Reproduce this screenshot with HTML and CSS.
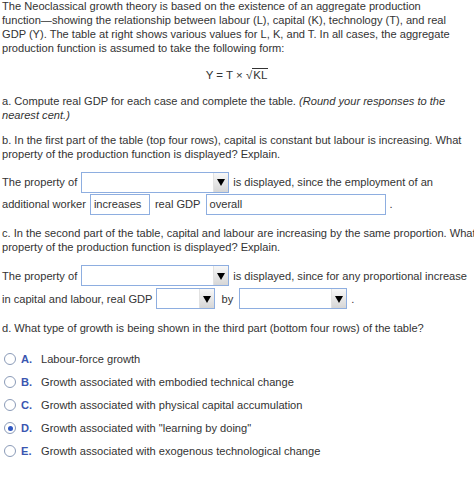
FILE: index.html
```html
<!DOCTYPE html>
<html>
<head>
<meta charset="utf-8">
<link rel="stylesheet" href="styles.css">
</head>
<body>
<div class="page">
  <p class="para intro">The Neoclassical growth theory is based on the existence of an aggregate production<br>function—showing the relationship between labour (L), capital (K), technology (T), and real<br>GDP (Y). The table at right shows various values for L, K, and T. In all cases, the aggregate<br>production function is assumed to take the following form:</p>

  <div class="formula">Y = T × <span class="sqrt"><span class="rad">√</span><span class="radicand">KL</span></span></div>

  <p class="para qa">a. Compute real GDP for each case and complete the table. <i>(Round your responses to the<br>nearest cent.)</i></p>

  <p class="para qb">b. In the first part of the table (top four rows), capital is constant but labour is increasing. What<br>property of the production function is displayed? Explain.</p>

  <div class="answers ab">
    <div class="row">
      <span>The property of</span>
      <span class="select s1"><span class="arrow"><svg viewBox="0 0 8 8" width="8" height="8"><path d="M0 1 H8 L4 8 Z" fill="#000"/></svg></span></span>
      <span>is displayed, since the employment of an</span>
    </div>
    <div class="row">
      <span>additional worker</span>
      <span class="field f-inc">increases</span>
      <span class="spaced">real GDP</span>
      <span class="field f-ov">overall</span>
      <span>.</span>
    </div>
  </div>

  <p class="para qc">c. In the second part of the table, capital and labour are increasing by the same proportion. What<br>property of the production function is displayed? Explain.</p>

  <div class="answers ac">
    <div class="row">
      <span>The property of</span>
      <span class="select s1"><span class="arrow"><svg viewBox="0 0 8 8" width="8" height="8"><path d="M0 1 H8 L4 8 Z" fill="#000"/></svg></span></span>
      <span>is displayed, since for any proportional increase</span>
    </div>
    <div class="row">
      <span>in capital and labour, real GDP</span>
      <span class="select s2"><span class="arrow"><svg viewBox="0 0 8 8" width="8" height="8"><path d="M0 1 H8 L4 8 Z" fill="#000"/></svg></span></span>
      <span class="by">by</span>
      <span class="select s3"><span class="arrow"><svg viewBox="0 0 8 8" width="8" height="8"><path d="M0 1 H8 L4 8 Z" fill="#000"/></svg></span></span>
      <span>.</span>
    </div>
  </div>

  <p class="para qd">d. What type of growth is being shown in the third part (bottom four rows) of the table?</p>

  <ul class="options">
    <li class="opt"><span class="radio"></span><span class="letter">A.</span><span>Labour-force growth</span></li>
    <li class="opt"><span class="radio"></span><span class="letter">B.</span><span>Growth associated with embodied technical change</span></li>
    <li class="opt"><span class="radio"></span><span class="letter">C.</span><span>Growth associated with physical capital accumulation</span></li>
    <li class="opt"><span class="radio checked"></span><span class="letter">D.</span><span>Growth associated with "learning by doing"</span></li>
    <li class="opt"><span class="radio"></span><span class="letter">E.</span><span>Growth associated with exogenous technological change</span></li>
  </ul>
</div>
</body>
</html>
```

FILE: styles.css
```css
html, body {
  margin: 0;
  padding: 0;
  background: #ffffff;
}
body {
  font-family: "Liberation Sans", Arial, sans-serif;
  font-size: 11.1px;
  color: #333333;
  overflow: hidden;
}
.page {
  padding: 0 0 0 2px;
  width: 520px;
}
.para {
  margin: 0;
  line-height: 14px;
  white-space: nowrap;
}
.intro {
  margin-top: -1px;
}
.formula {
  text-align: center;
  width: 470px;
  margin-top: 12px;
  line-height: 16px;
  font-size: 11.5px;
}
.sqrt {
  display: inline-block;
}
.radicand {
  border-top: 1px solid #333;
  padding: 0 1px;
}
.qa { margin-top: 11px; }
.qb { margin-top: 11px; }
.answers {
  display: flex;
  flex-direction: column;
}
.ab { margin-top: 10px; }
.ac { margin-top: 10px; }
.row {
  display: flex;
  align-items: center;
  gap: 4px;
  height: 22px;
  white-space: nowrap;
}
.ac .row { height: 23px; }
.select {
  position: relative;
  box-sizing: border-box;
  height: 21px;
  border: 1px solid #8eaee0;
  background: #fff;
}
.s1 { width: 148px; }
.s2 { width: 59px; }
.s3 { width: 108px; }
.arrow {
  position: absolute;
  right: 0;
  top: 0;
  bottom: 0;
  width: 14px;
  background: linear-gradient(#f8f8f8, #d6d6d6);
  border-left: 1px solid #e2e2e2;
  display: flex;
  align-items: center;
  justify-content: center;
}
.field {
  box-sizing: border-box;
  height: 21px;
  border: 1px solid #8eaee0;
  padding: 0 3px;
  line-height: 19px;
  color: #333;
}
.f-inc { width: 60px; }
.f-ov { width: 180px; }
.spaced { margin: 0 1px; }
.by { margin: 0 2px; }
.qc { margin-top: 11px; }
.qd { margin-top: 11px; }
.options {
  list-style: none;
  margin: 17px 0 0 0;
  padding: 0;
  display: flex;
  flex-direction: column;
  gap: 9px;
}
.opt {
  display: flex;
  align-items: center;
  height: 14px;
  line-height: 14px;
}
.radio {
  box-sizing: border-box;
  width: 12px;
  height: 12px;
  border: 1px solid #8b9bb8;
  border-radius: 50%;
  margin-left: 2px;
  margin-right: 5px;
  position: relative;
  background: #fff;
}
.radio.checked::after {
  content: "";
  position: absolute;
  left: 2.5px;
  top: 2.5px;
  width: 5px;
  height: 5px;
  border-radius: 50%;
  background: #2f57c2;
}
.letter {
  color: #3a56b0;
  font-weight: bold;
  width: 20px;
}
```
